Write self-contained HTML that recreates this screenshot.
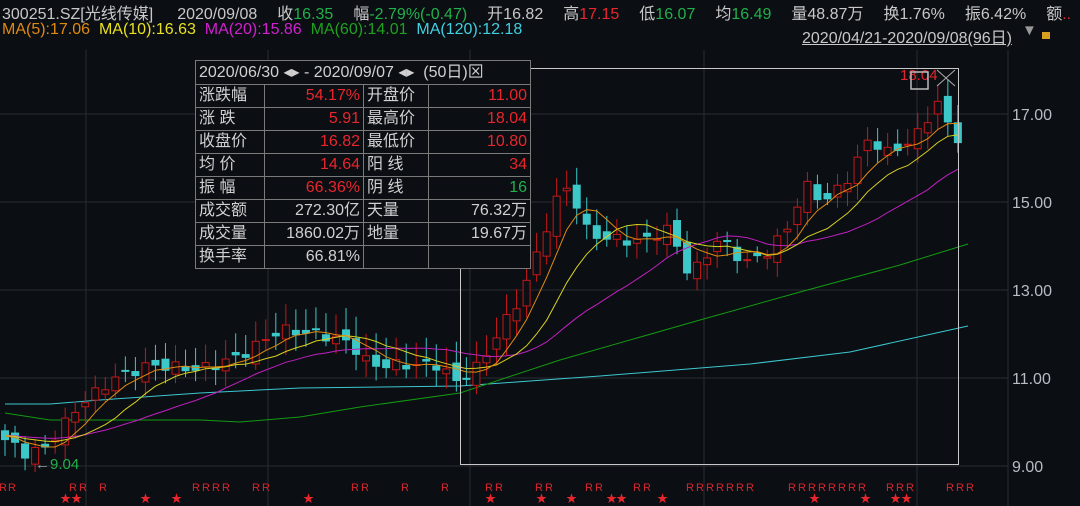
<!DOCTYPE html>
<html><head><meta charset="utf-8"><style>
body{margin:0;width:1080px;height:506px;background:#0b0e13;overflow:hidden;font-family:"Liberation Sans","Noto Sans CJK SC",sans-serif;position:relative}
.t{position:absolute;white-space:nowrap;font-size:16px;color:#c8c8c8}
.t1 span.i{margin-right:20px}
.g{color:#22b04a}.r{color:#e8262c}
#tb{position:absolute;left:195px;top:60px;border-collapse:collapse;background:#0b0e13;font-size:16px;color:#d0d0d0}
#tb td{border:1px solid #7a7a7a;height:22px;padding:0 3px;line-height:20px}
#tb td.n{text-align:right}
</style></head><body>
<svg id="s" width="1080" height="506" style="position:absolute;left:0;top:0"></svg>
<div class="t t1" style="left:2px;top:0px"><span class="i" style="margin-right:24px">300251.SZ[光线传媒]</span><span class="i">2020/09/08</span><span class="i">收<span class="g">16.35</span></span><span class="i">幅<span class="g">-2.79%(-0.47)</span></span><span class="i">开16.82</span><span class="i">高<span class="r">17.15</span></span><span class="i">低<span class="g">16.07</span></span><span class="i">均<span class="g">16.49</span></span><span class="i">量48.87万</span><span class="i">换1.76%</span><span class="i">振6.42%</span><span class="i">额<span class="r">..</span></span></div>
<div class="t" style="left:2px;top:21px"><span style="color:#e08a10">MA(5):17.06</span> &nbsp;<span style="color:#e8e020">MA(10):16.63</span> &nbsp;<span style="color:#d020d0">MA(20):15.86</span> &nbsp;<span style="color:#1fa01f">MA(60):14.01</span> &nbsp;<span style="color:#40d0e0">MA(120):12.18</span></div>
<div class="t" style="left:802px;top:24px;text-decoration:underline">2020/04/21-2020/09/08(96日)</div>
<div class="t" style="left:1022px;top:22px;font-size:15px;color:#999">▼</div>
<div style="position:absolute;left:1042px;top:32px;width:8px;height:7px;background:#d8a020"></div>
<table id="tb">
<tr><td colspan="4" style="height:23px">2020/06/30 ◂▸ - 2020/09/07 ◂▸ &nbsp;(50日)⊠</td></tr>
<tr><td style="width:62px">涨跌幅</td><td class="n r" style="width:92px">54.17%</td><td style="width:58px">开盘价</td><td class="n r" style="width:95px">11.00</td></tr>
<tr><td>涨 跌</td><td class="n r">5.91</td><td>最高价</td><td class="n r">18.04</td></tr>
<tr><td>收盘价</td><td class="n r">16.82</td><td>最低价</td><td class="n r">10.80</td></tr>
<tr><td>均 价</td><td class="n r">14.64</td><td>阳 线</td><td class="n r">34</td></tr>
<tr><td>振 幅</td><td class="n r">66.36%</td><td>阴 线</td><td class="n g">16</td></tr>
<tr><td>成交额</td><td class="n">272.30亿</td><td>天量</td><td class="n">76.32万</td></tr>
<tr><td>成交量</td><td class="n">1860.02万</td><td>地量</td><td class="n">19.67万</td></tr>
<tr><td>换手率</td><td class="n">66.81%</td><td></td><td></td></tr>
</table>
<script>
var s=document.getElementById('s'),h='';
function Y(p){return 114+(17-p)*44}
[114,202,290,378,466].forEach(function(y,i){h+='<line x1="0" x2="1008" y1="'+y+'" y2="'+y+'" stroke="#2a2c30"/>';h+='<text x="1012" y="'+(y+6)+'" fill="#b8bcc4" font-size="16" font-family="Liberation Sans">'+['17.00','15.00','13.00','11.00','9.00'][i]+'</text>'});
[86,268,470,704,917,1008].forEach(function(x){h+='<line y1="50" y2="506" x1="'+x+'" x2="'+x+'" stroke="#2a2c30"/>'});
var kp=[[5,9.6],[25,9.3],[45,9.4],[80,10.4],[115,11.0],[150,11.3],[200,11.2],[240,11.5],[280,12.1],[320,12.0],[350,11.8],[370,11.3],[440,11.3],[455,10.9],[480,11.3],[500,12.1],[520,12.8],[540,14.0],[555,15.0],[570,15.4],[585,14.4],[600,14.2],[640,14.1],[670,14.4],[690,13.3],[720,14.2],[745,13.6],[770,13.9],[790,14.5],[805,15.4],[825,15.0],[850,15.6],[870,16.5],[885,16.1],[905,16.3],[920,16.6],[935,17.2],[945,17.4],[957,16.9],[968,16.35]];
function ip(x){for(var k=1;k<kp.length;k++)if(x<=kp[k][0]){var a=kp[k-1],b=kp[k];return a[1]+(b[1]-a[1])*(x-a[0])/(b[0]-a[0])}return kp[kp.length-1][1]}
var C=[],N=96;for(var i=0;i<N;i++){var x=5+i*10.03;C.push(ip(x)+Math.sin(i*2.3)*0.12)}
C[N-1]=16.35;C[N-2]=16.82;
var all=[];for(i=0;i<20;i++)all.push(9.7);all=all.concat(C);
function ma(n,col){var p='';for(var i=0;i<N;i++){var sm=0;for(var j=0;j<n;j++)sm+=all[i+20-j];p+=(i?'L':'M')+(5+i*10.03).toFixed(1)+' '+Y(sm/n).toFixed(1)}h+='<path d="'+p+'" fill="none" stroke="'+col+'" stroke-width="1"/>'}
h+='<polyline points="5,404 50,404 100,400 200,393 300,388 460,386 600,376 750,364 850,352 968,326" fill="none" stroke="#3cc8d0"/>';
h+='<polyline points="5,413 50,420 200,420 240,422 300,417 360,407 460,393 560,360 700,320 800,292 900,265 968,244" fill="none" stroke="#139a13"/>';
for(i=0;i<N;i++){var x=5+i*10.03,c=C[i],o=i?C[i-1]+Math.sin(i*1.7)*0.15:9.8;if(i==N-1)o=16.8;if(i==N-2)o=17.4;if(i==N-3)o=17.0;var hi=Math.max(o,c)+0.15+Math.abs(Math.sin(i*3.1))*0.35,lo=Math.min(o,c)-0.12-Math.abs(Math.cos(i*2.7))*0.25;var up=c>=o,col=up?'#c41818':'#3cc8c8';
h+='<line x1="'+x+'" x2="'+x+'" y1="'+Y(hi)+'" y2="'+Y(lo)+'" stroke="'+col+'"/>';var t=Y(Math.max(o,c)),b=Math.max(Y(Math.min(o,c))-t,1);
h+='<rect x="'+(x-3.5)+'" y="'+t+'" width="7" height="'+b+'" fill="'+(up?'#0b0e13':col)+'" stroke="'+col+'"/>'}
ma(20,'#c020c0');ma(10,'#d8d020');ma(5,'#e08a10');
h+='<rect x="460.5" y="68.5" width="498" height="396" fill="none" stroke="#c8c8c8"/>';
h+='<text x="900" y="80" fill="#e0262c" font-size="15" font-family="Liberation Sans">18.04</text><rect x="911" y="72" width="17" height="17" fill="none" stroke="#bbb" stroke-width="1.5"/><path d="M937 70 L955 86 M955 70 L937 86" stroke="#aaa"/>';
h+='<text x="35" y="469" fill="#22b04a" font-size="15" font-family="Liberation Sans"><tspan fill="#999">←</tspan>9.04</text>';
[3,12,73,83,103,196,206,216,226,256,266,355,365,405,445,489,499,539,549,589,599,637,647,690,700,710,720,730,740,750,792,802,812,822,832,842,852,862,890,900,910,950,960,970].forEach(function(x){h+='<text x="'+(x-4)+'" y="491" fill="#d8262c" font-size="11" font-family="Liberation Sans">R</text>'});
[65,76,145,176,308,490,541,571,611,621,662,814,865,895,906].forEach(function(x){h+='<text x="'+(x-5)+'" y="502" fill="#e8262c" font-size="11">★</text>'});
s.innerHTML=h;
</script>
</body></html>
